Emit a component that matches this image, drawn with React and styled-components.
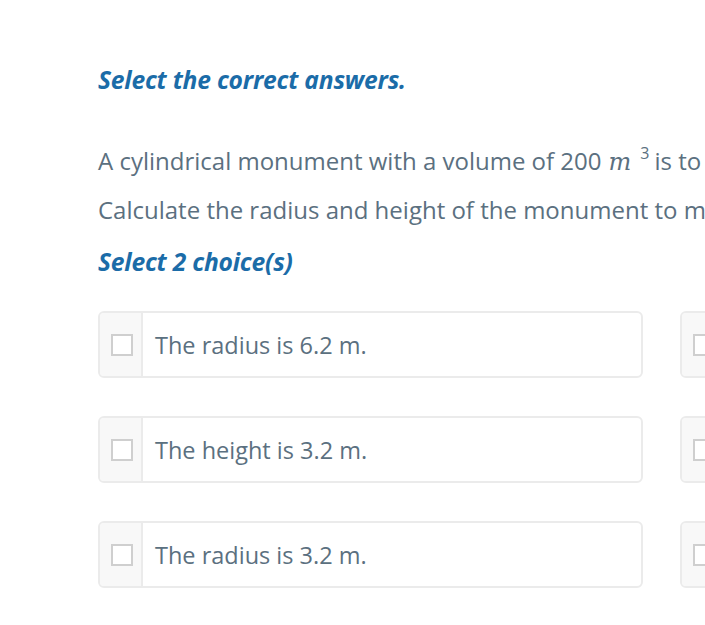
import React from "react";
import styled, { createGlobalStyle } from "styled-components";

const Global = createGlobalStyle`
  html, body { margin: 0; padding: 0; background: #ffffff; }
  body { overflow: hidden; font-family: "Open Sans", "Noto Sans", sans-serif; }
`;

const Page = styled.div`
  width: 705px;
  height: 625px;
  overflow: hidden;
  padding: 62px 0 0 98px;
  box-sizing: border-box;
`;

const Instruction = styled.h2`
  margin: 0;
  font-family: "Open Sans", sans-serif;
  font-style: italic;
  font-weight: 700;
  font-size: 24.6px;
  line-height: 36px;
  letter-spacing: -0.2px;
  color: #1b6ca8;
  white-space: nowrap;
`;

const Question = styled.div`
  margin-top: 39px;
  width: 900px;
  font-size: 24px;
  line-height: 48px;
  color: #5b7080;
  white-space: nowrap;
`;

const Line = styled.p`
  margin: 0;
`;

const MathVar = styled.span`
  font-family: "DejaVu Serif", serif;
  font-style: italic;
  margin-left: 7px;
`;

const Sup = styled.sup`
  font-size: 16px;
  margin-left: 9px;
  margin-right: 5px;
  vertical-align: 11px;
  line-height: 0;
`;

const Choices = styled(Instruction)`
  margin-top: 10px;
`;

const Grid = styled.div`
  margin-top: 31px;
  display: grid;
  grid-template-columns: 545px 545px;
  column-gap: 37px;
  row-gap: 38px;
`;

const Card = styled.label`
  display: flex;
  height: 67px;
  box-sizing: border-box;
  border: 2px solid #ebebeb;
  border-radius: 6px;
  background: #fff;
  overflow: hidden;
  cursor: pointer;
`;

const BoxCell = styled.div`
  width: 41px;
  flex: none;
  background: #f8f8f8;
  border-right: 2px solid #ebebeb;
  display: flex;
  align-items: center;
  justify-content: center;
`;

const Box = styled.span`
  width: 18px;
  height: 18px;
  border: 2px solid #cfcfcf;
  background: #fff;
  margin-left: 2px;
`;

const Answer = styled.span`
  display: flex;
  align-items: center;
  padding-left: 12px;
  font-size: 23.5px;
  color: #5b7080;
  white-space: nowrap;
`;

const options = [
  "The radius is 6.2 m.",
  "The radius is 4.5 m.",
  "The height is 3.2 m.",
  "The height is 6.2 m.",
  "The radius is 3.2 m.",
  "The height is 4.5 m.",
];

export default function App() {
  return (
    <>
      <Global />
      <Page>
        <Instruction>Select the correct answers.</Instruction>
        <Question>
          <Line>
            A cylindrical monument with a volume of 200<MathVar>m</MathVar>
            <Sup>3</Sup>is to be constructed.
          </Line>
          <Line>Calculate the radius and height of the monument to minimize the surface area.</Line>
        </Question>
        <Choices>Select 2 choice(s)</Choices>
        <Grid>
          {options.map((o) => (
            <Card key={o}>
              <BoxCell>
                <Box />
              </BoxCell>
              <Answer>{o}</Answer>
            </Card>
          ))}
        </Grid>
      </Page>
    </>
  );
}
